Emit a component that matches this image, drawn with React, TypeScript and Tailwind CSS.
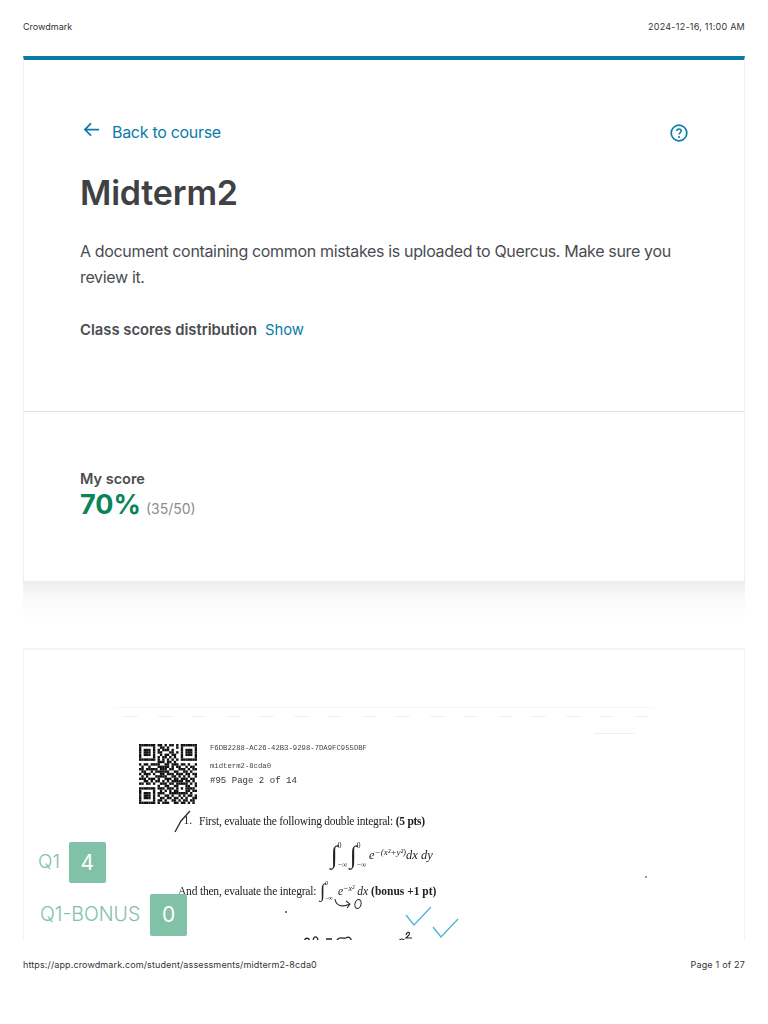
const QR_ROWS = [
  "1111111011010110101111111",
  "1000001001101000101000001",
  "1011101010111010001011101",
  "1011101011000110101011101",
  "1011101001011011001011101",
  "1000001010110101001000001",
  "1111111010101010101111111",
  "0000000011101101000000000",
  "1011011110011011101101001",
  "0100100011111010110010110",
  "1101111101110110011101011",
  "0110010111111001100110100",
  "1011101001101110111011011",
  "0101000111110011010101001",
  "1110111010011101101110110",
  "0011010110101011111011010",
  "1101101001110110111110101",
  "0000000010011001100011001",
  "1111111011101110101011110",
  "1000001001010101100011011",
  "1011101011100111111110100",
  "1011101010011010010101101",
  "1011101001101101101010011",
  "1000001011010011010110110",
  "1111111010111001101101010",
];

function QrCode() {
  return (
    <svg width="58" height="60" viewBox="0 0 25 25" preserveAspectRatio="none" className="shrink-0">
      {QR_ROWS.map((row, y) =>
        row.split("").map((cell, x) =>
          cell === "1" ? <rect key={`${x}-${y}`} x={x} y={y} width="1.02" height="1.02" fill="#111" /> : null
        )
      )}
    </svg>
  );
}

function Check({ className }: { className: string }) {
  return (
    <svg width="28" height="22" viewBox="0 0 28 22" fill="none" className={className}>
      <path d="M1 9 L9 19 L26 1" stroke="#4fb3d3" strokeWidth="1.3" />
    </svg>
  );
}

function Integral() {
  return (
    <div className="flex h-[30px] w-[19px] shrink-0 items-center font-['Liberation_Serif',serif] text-[#222]">
      <span className="text-[25px] leading-[30px]">∫</span>
      <div className="flex h-[27px] flex-col justify-between text-[7.5px] leading-[8px]">
        <span>0</span>
        <span>−∞</span>
      </div>
    </div>
  );
}

function SmallIntegral() {
  return (
    <div className="flex h-[22px] w-[18px] shrink-0 items-center font-['Liberation_Serif',serif] text-[#222]">
      <span className="text-[19px] leading-[22px]">∫</span>
      <div className="flex h-[22px] flex-col justify-between text-[6px] leading-[7px]">
        <span>0</span>
        <span>−∞</span>
      </div>
    </div>
  );
}

function Scan() {
  return (
    <div className="relative mx-auto mt-[57px] flex h-[233px] w-[540px] flex-col overflow-hidden border-t border-[#f6f6f6] bg-white pt-[36px] font-['Liberation_Serif',serif] text-[#222] blur-[0.3px]">
      {/* scanned page edge marks */}
      <div className="absolute left-[10px] right-[4px] top-[8px] h-px bg-[repeating-linear-gradient(90deg,#efefef_0_14px,transparent_14px_34px)]" />
      <div className="absolute right-[20px] top-[25px] h-px w-[40px] bg-[#eeeeee]" />

      <div className="flex gap-[13px] pl-[25px]">
        <QrCode />
        <div className="-mt-[1px] flex flex-col font-['Liberation_Mono',monospace] text-[#444]">
          <span className="text-[7.27px] leading-[10px]">F6DB2288-AC26-42B3-9298-7DA9FC955DBF</span>
          <span className="mt-[8px] text-[7.27px] leading-[10px]">midterm2-8cda0</span>
          <span className="mt-[4px] text-[9.06px] leading-[12px] text-[#333]">#95 Page 2 of 14</span>
        </div>
      </div>

      <div className="mt-[5px] flex items-center gap-[7px] pl-[58px]">
        {/* struck-through question number */}
        <div className="relative flex h-[24px] w-[20px] items-center justify-end text-[11.5px]">
          <span>1.</span>
          <svg width="20" height="24" viewBox="0 0 20 24" fill="none" className="absolute left-0 top-0">
            <path d="M3 23 L9 12 L18 2" stroke="#333" strokeWidth="1.4" />
          </svg>
        </div>
        <span className="whitespace-nowrap text-[11.5px] leading-[14px] tracking-[-0.24px]">
          First, evaluate the following double integral: <b>(5 pts)</b>
        </span>
      </div>

      <div className="mt-[7px] flex items-center pl-[217px]">
        <Integral />
        <Integral />
        <span className="whitespace-nowrap text-[12.5px] italic leading-[20px]">
          e<sup className="text-[9px] leading-none">−(x²+y²)</sup>dx dy
        </span>
      </div>

      <div className="mt-[10px] flex items-center pl-[64px]">
        <span className="w-[142px] whitespace-nowrap text-[11.5px] leading-[14px] tracking-[-0.2px]">And then, evaluate the integral:</span>
        <SmallIntegral />
        <span className="whitespace-nowrap text-[11.5px] leading-[18px]">
          <i>e<sup className="text-[8px] leading-none">−x²</sup> dx</i> <b>(bonus +1 pt)</b>
        </span>
      </div>

      {/* handwriting and marker ticks */}
      <svg width="32" height="16" viewBox="0 0 32 16" fill="none" className="absolute left-[218px] top-[188px]">
        <path d="M3 3 C4 11 12 11 18 8 M14 5 L18 8 L15 12" stroke="#333" strokeWidth="1.1" />
        <ellipse cx="26" cy="8" rx="3" ry="4.5" stroke="#333" strokeWidth="1.1" transform="rotate(15 26 8)" />
      </svg>
      <Check className="absolute left-[291px] top-[198px]" />
      <Check className="absolute left-[318px] top-[210px]" />
      <svg width="130" height="16" viewBox="0 0 130 16" fill="none" className="absolute left-[188px] top-[220px]">
        <path d="M2 14 C3 9 7 9 8 14 M11 14 C11 8 15 7 16 12 M24 11 L30 11 M35 12 C38 8 41 11 44 10 C47 8 49 10 50 14" stroke="#222" strokeWidth="1.3" />
        <path d="M96 14 C98 10 102 10 103 14 M104 7 C105 3 109 4 107 7 L104 10 L110 10" stroke="#222" strokeWidth="1.1" />
      </svg>
      <div className="absolute left-[171px] top-[203px] h-[2px] w-[2px] rounded-full bg-[#444]" />
      <div className="absolute left-[531px] top-[168px] h-[2px] w-[2px] rounded-full bg-[#777]" />
    </div>
  );
}

export default function App() {
  return (
    <div className="flex h-[1024px] w-[768px] flex-col overflow-hidden bg-white px-[23px] font-['Inter','Liberation_Sans',sans-serif] text-[#3f4144]">
      <header className="flex h-[56px] shrink-0 items-start justify-between pt-[21px] text-[9px] leading-[11px] text-[#333]">
        <span>Crowdmark</span>
        <span className="tracking-[0.25px]">2024-12-16, 11:00 AM</span>
      </header>

      {/* assessment card */}
      <section className="shrink-0 border-x border-[#f0f0f0] border-t-4 border-t-[#0a7ba8] bg-white">
        <div className="h-[352px] border-b border-[#dedede] px-[56px] pt-[60px]">
          <div className="flex items-center justify-between">
            <a className="flex items-center gap-[12px] pl-[3px] text-[16px] leading-[24px] tracking-[-0.3px] text-[#0a7ba8]">
              <svg width="17" height="18" viewBox="0 0 18 18" fill="none" stroke="#0a7ba8" strokeWidth="1.8" className="-mt-[4px]">
                <path d="M17 8.5 H2 M8.5 2 L2 8.5 L8.5 15" />
              </svg>
              Back to course
            </a>
            <svg width="18" height="18" viewBox="0 0 18 18" fill="none" className="mt-[2px]">
              <circle cx="9" cy="9" r="7.8" stroke="#0a7ba8" strokeWidth="1.7" />
              <path d="M6.8 7 C6.9 4.3 11.2 4.4 11.2 7 C11.2 8.7 9 8.8 9 10.6" stroke="#0a7ba8" strokeWidth="1.5" />
              <circle cx="9" cy="13" r="1" fill="#0a7ba8" />
            </svg>
          </div>
          <h1 className="mt-[27px] text-[34px] font-semibold leading-[44px] tracking-[-0.2px] text-[#3f4144]">Midterm2</h1>
          <p className="mt-[23px] w-[610px] text-[16px] leading-[26px] tracking-[-0.34px] text-[#4a4c4f]">
            A document containing common mistakes is uploaded to Quercus. Make sure you review it.
          </p>
          <div className="mt-[28px] flex items-center gap-[8px] text-[14.8px] leading-[24px]">
            <span className="font-semibold text-[#4a4c4f]">Class scores distribution</span>
            <a className="text-[#0a7ba8]">Show</a>
          </div>
        </div>
        <div className="h-[169px] px-[56px] pt-[57px]">
          <div className="text-[14.5px] font-semibold leading-[20px] text-[#4a4c4f]">My score</div>
          <div className="flex items-baseline gap-[5px]">
            <span className="text-[27px] font-bold leading-[31px] text-[#0b8457]">70%</span>
            <span className="text-[14px] leading-[20px] text-[#8a8c8f]">(35/50)</span>
          </div>
        </div>
      </section>
      <div className="h-[40px] shrink-0 bg-gradient-to-b from-[#ededed] via-[#fbfbfb] to-white" />

      {/* submission page */}
      <section className="relative mt-[27px] h-[293px] shrink-0 border-x border-t-2 border-[#f3f3f3] bg-white">
        <Scan />
        <div className="absolute left-[14px] top-[192px] flex items-center gap-[9px]">
          <span className="text-[19px] font-light text-[#80c1a7]">Q1</span>
          <span className="flex h-[41px] w-[37px] items-center justify-center rounded-[2px] bg-[#80c1a7] text-[21px] text-white">4</span>
        </div>
        <div className="absolute left-[16px] top-[244px] flex items-center gap-[10px]">
          <span className="text-[19.5px] font-light text-[#80c1a7]">Q1-BONUS</span>
          <span className="flex h-[42px] w-[37px] items-center justify-center rounded-[2px] bg-[#80c1a7] text-[21px] text-white">0</span>
        </div>
      </section>

      <footer className="flex shrink-0 justify-between pt-[18px] text-[9px] leading-[11px] text-[#333]">
        <span className="tracking-[0.12px]">https://app.crowdmark.com/student/assessments/midterm2-8cda0</span>
        <span className="tracking-[0.2px]">Page 1 of 27</span>
      </footer>
    </div>
  );
}
